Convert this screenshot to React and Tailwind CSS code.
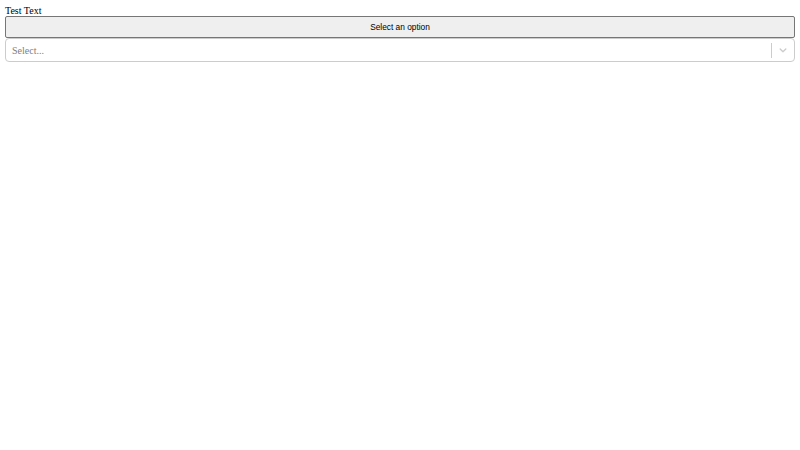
export default function App() {
  return (
    <div className="p-[5px] bg-white" style={{ fontFamily: '"Liberation Serif", serif' }}>
      <div className="text-[10px] leading-[11px] text-black">Test Text</div>
      <button className="w-full h-[22px] border border-[#767676] bg-[#efefef] rounded-[2px] text-[8.33px] text-black flex items-center justify-center" style={{ fontFamily: '"Liberation Sans", Arial, sans-serif' }}>
        Select an option
      </button>
      <div className="flex items-center h-[24px] border border-[#cccccc] rounded-[4px] bg-white">
        <div className="flex-1 px-[6px] text-[10px] text-[#808080]">Select...</div>
        <div className="w-px h-[15px] bg-[#cccccc]"></div>
        <div className="w-[22px] flex items-center justify-center text-[#cccccc]">
          <svg width="12" height="12" viewBox="0 0 20 20" fill="currentColor">
            <path d="M4.516 7.548c0.436-0.446 1.043-0.481 1.576 0l3.908 3.747 3.908-3.747c0.533-0.481 1.141-0.446 1.574 0 0.436 0.445 0.408 1.197 0 1.615-0.406 0.418-4.695 4.502-4.695 4.502-0.217 0.223-0.502 0.335-0.787 0.335s-0.57-0.112-0.789-0.335c0 0-4.287-4.084-4.695-4.502s-0.436-1.170 0-1.615z" />
          </svg>
        </div>
      </div>
    </div>
  );
}
